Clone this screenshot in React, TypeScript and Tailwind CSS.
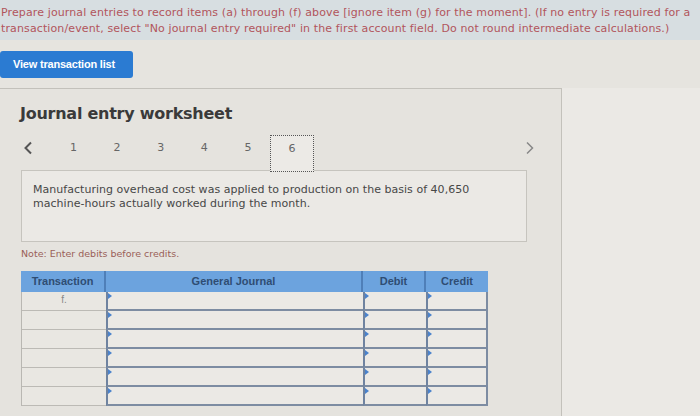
import React from "react";

const rows = ["f.", "", "", "", "", ""];

function Marker() {
  return (
    <span className="absolute left-0 top-[1px] w-0 h-0 border-t-[3px] border-b-[3px] border-l-[4px] border-t-transparent border-b-transparent border-l-[#4a82cc]" />
  );
}

function InputCell({ w }: { w: string }) {
  return (
    <div className={`relative ${w} h-full border-l-2 border-b-2 border-l-[#6f83a0] border-b-[#7d8ca2] bg-[#ebe9e5]`}>
      <Marker />
    </div>
  );
}

export default function App() {
  return (
    <div className="w-[700px] h-[416px] overflow-hidden bg-[#e6e4df] font-['DejaVu_Sans',sans-serif] text-[#444]">
      {/* instructions banner */}
      <div className="h-[40px] bg-[#d7dee1] pt-[5px] pl-[1px] text-[11px] leading-[16px] text-[#b2555c] whitespace-nowrap overflow-hidden tracking-[0.12px]">
        <p>
          Prepare journal entries to record items (a) through (f) above [ignore item (g) for the moment]. (If no entry is required for a
        </p>
        <p>
          transaction/event, select "No journal entry required" in the first account field. Do not round intermediate calculations.)
        </p>
      </div>

      <div className="pt-[11px]">
        <button className="w-[133px] h-[27px] rounded-[3px] bg-[#2b7bd2] text-white text-[11px] font-bold font-['Liberation_Sans',sans-serif] text-left pl-[13px] tracking-[-0.2px]">
          View transaction list
        </button>
      </div>

      <div className="flex mt-[10px] h-[400px]">
        {/* worksheet panel */}
        <div className="w-[562px] border-t border-r border-[#c3c1bb] bg-[#e5e3de]">
          <h2 className="pl-[20px] pt-[14px] text-[16px] font-bold text-[#3a3a3a] leading-[22px] tracking-[-0.25px]">
            Journal entry worksheet
          </h2>

          {/* step navigation */}
          <div className="flex items-start h-[37px] mt-[10px] ml-[21px] w-[516px] text-[11px] text-[#666] leading-[14px]">
            <svg width="10" height="14" viewBox="0 0 10 14" className="ml-[2px] mr-[35px] mt-[6px]">
              <path d="M8 1.5 L2.5 7 L8 12.5" fill="none" stroke="#555" strokeWidth="2" />
            </svg>
            {["1", "2", "3", "4", "5"].map((n) => (
              <span key={n} className="w-[43.6px] text-left pl-[2px] mt-[6px]">
                {n}
              </span>
            ))}
            <span className="w-[44px] h-[37px] flex justify-center pt-[6px] border border-dotted border-[#555] bg-[#eceae6] -ml-[16px]">
              6
            </span>
            <svg width="10" height="14" viewBox="0 0 10 14" className="ml-auto mr-[2px] mt-[6px]">
              <path d="M2 1.5 L7.5 7 L2 12.5" fill="none" stroke="#888" strokeWidth="1.5" />
            </svg>
          </div>

          {/* transaction description */}
          <div className="ml-[21px] -mt-[2px] w-[506px] h-[72px] border border-[#c6c4be] bg-[#ebe9e5] pl-[11px] pt-[12px] text-[11px] leading-[14px] text-[#474747] tracking-[0.03px]">
            <p>Manufacturing overhead cost was applied to production on the basis of 40,650</p>
            <p>machine-hours actually worked during the month.</p>
          </div>

          <p className="ml-[21px] mt-[6px] text-[9.5px] text-[#9a5f58] leading-[12px]">
            Note: Enter debits before credits.
          </p>

          {/* journal table */}
          <div className="ml-[21px] mt-[11px] w-[467px] font-['Liberation_Sans',sans-serif]">
            <div className="flex h-[21px] bg-[#6ca3de] text-[11px] font-bold text-[#2f4d73] items-stretch">
              <div className="w-[85px] flex items-center justify-center border-r-2 border-[#4f7fb8]">Transaction</div>
              <div className="w-[257px] flex items-center justify-center border-r-2 border-[#4f7fb8]">General Journal</div>
              <div className="w-[63px] flex items-center justify-center border-r-2 border-[#4f7fb8]">Debit</div>
              <div className="w-[62px] flex items-center justify-center">Credit</div>
            </div>
            <div className="border-l border-r-2 border-l-[#b9b7b2] border-r-[#7d8ca2]">
              {rows.map((t, i) => (
                <div key={i} className="flex h-[19px]">
                  <div className="w-[84px] h-full border-b border-[#bcbab5] bg-[#e9e7e2] text-center text-[10px] text-[#888] leading-[15px]">
                    {t}
                  </div>
                  <InputCell w="w-[258px]" />
                  <InputCell w="w-[63px]" />
                  <InputCell w="w-[60px]" />
                </div>
              ))}
            </div>
          </div>
        </div>
        <div className="flex-1 bg-[#ebe9e5]" />
      </div>
    </div>
  );
}
